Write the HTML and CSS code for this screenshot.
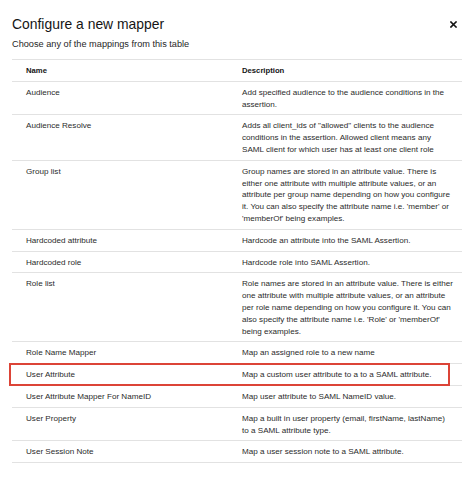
FILE: index.html
```html
<!DOCTYPE html>
<html>
<head>
<meta charset="utf-8">
<link rel="stylesheet" href="styles.css">
</head>
<body>
<div class="modal">
  <div class="modal-head">
    <h1 class="title">Configure a new mapper</h1>
    <button class="close" aria-label="Close">
      <svg width="7" height="7" viewBox="0 0 7 7"><path d="M1 1L6 6M6 1L1 6" stroke="#151515" stroke-width="1.6" stroke-linecap="square"/></svg>
    </button>
  </div>
  <p class="subtitle">Choose any of the mappings from this table</p>
  <div class="table">
    <div class="row head"><div class="cell">Name</div><div class="cell">Description</div></div>
    <div class="row"><div class="cell">Audience</div><div class="cell">Add specified audience to the audience conditions in the assertion.</div></div>
    <div class="row"><div class="cell">Audience Resolve</div><div class="cell">Adds all client_ids of "allowed" clients to the audience conditions in the assertion. Allowed client means any SAML client for which user has at least one client role</div></div>
    <div class="row"><div class="cell">Group list</div><div class="cell">Group names are stored in an attribute value. There is either one attribute with multiple attribute values, or an attribute per group name depending on how you configure it. You can also specify the attribute name i.e. 'member' or 'memberOf' being examples.</div></div>
    <div class="row"><div class="cell">Hardcoded attribute</div><div class="cell">Hardcode an attribute into the SAML Assertion.</div></div>
    <div class="row"><div class="cell">Hardcoded role</div><div class="cell">Hardcode role into SAML Assertion.</div></div>
    <div class="row"><div class="cell">Role list</div><div class="cell">Role names are stored in an attribute value. There is either one attribute with multiple attribute values, or an attribute per role name depending on how you configure it. You can also specify the attribute name i.e. 'Role' or 'memberOf' being examples.</div></div>
    <div class="row"><div class="cell">Role Name Mapper</div><div class="cell">Map an assigned role to a new name</div></div>
    <div class="row highlight"><div class="cell">User Attribute</div><div class="cell">Map a custom user attribute to a to a SAML attribute.</div></div>
    <div class="row"><div class="cell">User Attribute Mapper For NameID</div><div class="cell">Map user attribute to SAML NameID value.</div></div>
    <div class="row"><div class="cell">User Property</div><div class="cell">Map a built in user property (email, firstName, lastName) to&nbsp;a SAML attribute type.</div></div>
    <div class="row"><div class="cell">User Session Note</div><div class="cell">Map a user session note to a SAML attribute.</div></div>
  </div>
</div>
</body>
</html>
```

FILE: styles.css
```css
html, body {
  margin: 0;
  padding: 0;
  background: #ffffff;
}
body {
  font-family: "Liberation Sans", Arial, sans-serif;
  color: #151515;
}
.modal {
  padding: 15px 12px 0 12px;
}
.modal-head {
  display: flex;
  align-items: center;
  justify-content: space-between;
  height: 18px;
}
.title {
  margin: 0;
  font-size: 13.9px;
  font-weight: normal;
  line-height: 18px;
  color: #151515;
}
.close {
  border: 0;
  background: none;
  padding: 0;
  margin-right: 5px;
  width: 7px;
  height: 7px;
  display: flex;
}
.subtitle {
  margin: 5px 0 0 0;
  font-size: 9.2px;
  line-height: 12px;
  color: #262626;
}
.table {
  margin-top: 9px;
  border-top: 1px solid #e2e2e2;
}
.row {
  display: grid;
  grid-template-columns: 216px 1fr;
  border-bottom: 1px solid #e2e2e2;
  font-size: 8.1px;
  line-height: 11.8px;
  color: #2b2b2b;
}
.cell {
  padding: 5px 8px 4px 14px;
}
.row.head {
  font-weight: bold;
  font-size: 7.7px;
  color: #151515;
}
.row.highlight {
  position: relative;
}
.row.highlight::after {
  content: "";
  position: absolute;
  left: -3px;
  right: 12px;
  top: -1px;
  bottom: -1px;
  border: 2px solid #dc4437;
  pointer-events: none;
}
```
